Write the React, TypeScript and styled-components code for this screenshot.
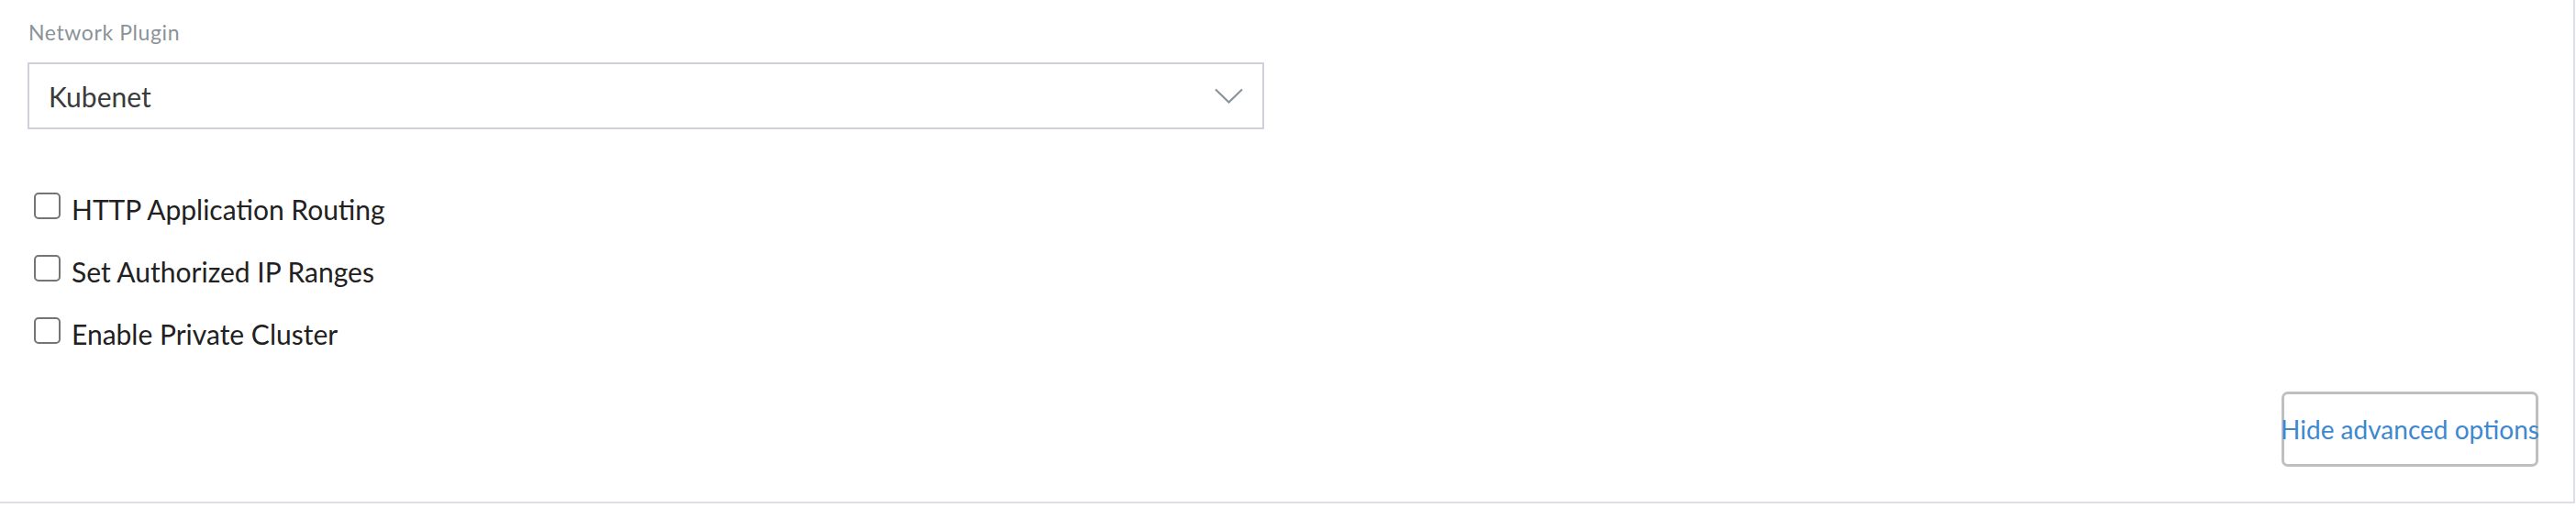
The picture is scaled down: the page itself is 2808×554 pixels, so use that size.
import styled, { createGlobalStyle } from 'styled-components';

const GlobalStyle = createGlobalStyle`
  html, body {
    margin: 0;
    padding: 0;
    background: #ffffff;
  }
  body {
    font-family: Lato, "Liberation Sans", sans-serif;
  }
`;

const Panel = styled.section`
  box-sizing: border-box;
  width: 2807px;
  height: 549px;
  background: #ffffff;
  border-right: 2px solid #dcdfe8;
  border-bottom: 2px solid #dcdfe8;
  padding: 22px 38px 38px 30px;
  display: flex;
  flex-direction: column;
`;

const Field = styled.div`
  display: flex;
  flex-direction: column;
`;

const Label = styled.label`
  font-size: 23px;
  line-height: 27px;
  letter-spacing: 0.6px;
  color: #8b9298;
  margin: 0 0 19px 1px;
`;

const Select = styled.div`
  box-sizing: border-box;
  width: 1348px;
  height: 73px;
  border: 2px solid #cfd2dc;
  display: flex;
  align-items: center;
  justify-content: space-between;
  padding: 0 21px 0 21px;
  cursor: pointer;
`;

const SelectValue = styled.span`
  font-size: 30px;
  line-height: 36px;
  color: #3a3a3a;
`;

const CheckList = styled.div`
  display: flex;
  flex-direction: column;
  gap: 32px;
  margin-top: 69px;
  padding-left: 7px;
`;

const CheckRow = styled.label`
  display: flex;
  align-items: flex-start;
  gap: 12px;
  cursor: pointer;
`;

const Box = styled.span`
  box-sizing: border-box;
  width: 29px;
  height: 29px;
  border: 2px solid #757575;
  border-radius: 5px;
  background: #ffffff;
  flex-shrink: 0;
`;

const CheckText = styled.span`
  font-size: 30px;
  line-height: 36px;
  color: #212121;
`;

const Footer = styled.div`
  margin-top: auto;
  display: flex;
  justify-content: flex-end;
`;

const LinkButton = styled.button`
  box-sizing: border-box;
  width: 280px;
  height: 82px;
  padding: 0;
  background: #ffffff;
  border: 3px solid #bfbfbf;
  border-radius: 7px;
  font-family: Lato, "Liberation Sans", sans-serif;
  font-size: 28px;
  color: #3d88cf;
  white-space: nowrap;
  display: flex;
  align-items: center;
  justify-content: center;
  overflow: visible;
  cursor: pointer;
`;

const Chevron = () => (
  <svg width="31" height="17" viewBox="0 0 31 17" fill="none">
    <path d="M1 1.5 L15.5 15.5 L30 1.5" stroke="#8a9399" strokeWidth="2.2" />
  </svg>
);

const options = [
  'HTTP Application Routing',
  'Set Authorized IP Ranges',
  'Enable Private Cluster',
];

export default function App() {
  return (
    <>
      <GlobalStyle />
      <Panel>
        <Field>
          <Label>Network Plugin</Label>
          <Select>
            <SelectValue>Kubenet</SelectValue>
            <Chevron />
          </Select>
        </Field>
        <CheckList>
          {options.map((o) => (
            <CheckRow key={o}>
              <Box />
              <CheckText>{o}</CheckText>
            </CheckRow>
          ))}
        </CheckList>
        <Footer>
          <LinkButton>Hide advanced options</LinkButton>
        </Footer>
      </Panel>
    </>
  );
}
